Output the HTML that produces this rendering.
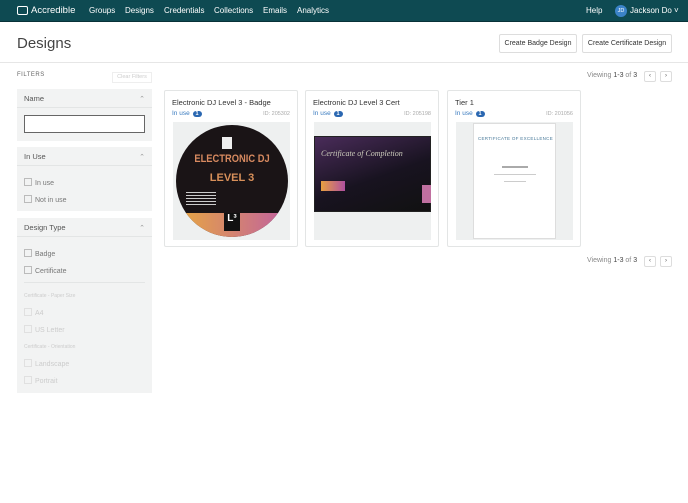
<!DOCTYPE html>
<html><head><style>
*{box-sizing:border-box;margin:0;padding:0}
body{width:688px;height:503px;background:#fff;font-family:"Liberation Sans",sans-serif;color:#333;position:relative;overflow:hidden}
.a{position:absolute}
.nav{left:0;top:0;width:688px;height:22px;background:#0e4a52;border-bottom:1px solid #083238}
.nav span{position:absolute;top:6px;font-size:8px;color:#fff}
.btn{border:1px solid #ddd;border-radius:2px;background:#fff;font-size:7px;color:#333;text-align:center;line-height:17px;height:19px}
.panel{background:#f2f3f3;left:17px;width:135px}
.ph{height:19px;border-bottom:1px solid #e3e5e5;font-size:7.5px;color:#555;padding:5px 7px;position:relative}
.ph:after{content:"⌃";position:absolute;right:7px;top:6px;font-size:7px;color:#999}
.cb{position:absolute;left:7px;font-size:7px;color:#777}
.cb:before{content:"";display:inline-block;width:6px;height:6px;border:1px solid #bbb;margin-right:3px;vertical-align:-1px}
.faint{color:#ccc}
.faint:before{border-color:#e0e0e0}
.card{top:90px;width:134px;height:157px;border:1px solid #e3e5e5;border-radius:2px;background:#fff}
.card .t{position:absolute;left:7px;top:7px;font-size:7.5px;color:#333}
.card .u{position:absolute;left:7px;top:19px;font-size:6.5px;color:#3a7bbf}
.card .u b{display:inline-block;background:#2a67b1;color:#fff;border-radius:4px;padding:0 3px;font-size:5.5px;margin-left:1px}
.card .id{position:absolute;right:7px;top:20px;font-size:5.5px;color:#aaa}
.card .im{position:absolute;left:8px;top:31px;width:117px;height:118px;background:#eef0f0}
.pg{font-size:7px;color:#888}
.pb{width:12px;height:11px;border:1px solid #ddd;border-radius:2px;font-size:6px;text-align:center;line-height:9px;color:#555}
</style></head><body>
<div class="a nav">
<div class="a" style="left:17px;top:6px;width:11px;height:9px;border:1.3px solid #fff;border-radius:2px"></div>
<span style="left:31px;top:5px;font-size:9.5px">Accredible</span>
<span style="left:89px">Groups</span><span style="left:125px">Designs</span><span style="left:164px">Credentials</span><span style="left:214px">Collections</span><span style="left:263px">Emails</span><span style="left:297px">Analytics</span>
<span style="left:586px">Help</span>
<div class="a" style="left:615px;top:5px;width:12px;height:12px;border-radius:6px;background:#3b83c8;color:#fff;font-size:5.5px;text-align:center;line-height:12px">JD</div>
<span style="left:630px">Jackson Do ˅</span>
</div>
<div class="a" style="left:17px;top:35px;font-size:15px;color:#444">Designs</div>
<div class="a btn" style="left:499px;top:34px;width:78px">Create Badge Design</div>
<div class="a btn" style="left:582px;top:34px;width:90px">Create Certificate Design</div>
<div class="a" style="left:0;top:62px;width:688px;height:1px;background:#e6e6e6"></div>
<div class="a" style="left:17px;top:72px;font-size:6px;color:#666;letter-spacing:.5px">FILTERS</div>
<div class="a" style="left:112px;top:72px;width:40px;height:11px;border:1px solid #eee;font-size:5.5px;color:#ccc;text-align:center;line-height:9px">Clear Filters</div>
<div class="a panel" style="top:89px;height:52px"><div class="ph">Name</div>
<div class="a" style="left:7px;top:26px;width:121px;height:18px;background:#fff;border:1px solid #666"></div></div>
<div class="a panel" style="top:147px;height:64px"><div class="ph">In Use</div>
<div class="cb" style="top:31px">In use</div><div class="cb" style="top:48px">Not in use</div></div>
<div class="a panel" style="top:218px;height:175px"><div class="ph">Design Type</div>
<div class="cb" style="top:31px">Badge</div><div class="cb" style="top:48px">Certificate</div>
<div class="a" style="left:7px;top:64px;width:121px;height:1px;background:#e3e5e5"></div>
<div class="a" style="left:7px;top:75px;font-size:5px;color:#ccc">Certificate - Paper Size</div>
<div class="cb faint" style="top:90px">A4</div><div class="cb faint" style="top:107px">US Letter</div>
<div class="a" style="left:7px;top:126px;font-size:5px;color:#ccc">Certificate - Orientation</div>
<div class="cb faint" style="top:141px">Landscape</div><div class="cb faint" style="top:158px">Portrait</div></div>
<div class="a pg" style="left:587px;top:72px">Viewing <span style="color:#444">1-3</span> of <span style="color:#444">3</span></div>
<div class="a pb" style="left:644px;top:71px">‹</div><div class="a pb" style="left:660px;top:71px">›</div>
<div class="a pg" style="left:587px;top:257px">Viewing <span style="color:#444">1-3</span> of <span style="color:#444">3</span></div>
<div class="a pb" style="left:644px;top:256px">‹</div><div class="a pb" style="left:660px;top:256px">›</div>

<div class="a card" style="left:164px"><div class="t">Electronic DJ Level 3 - Badge</div><div class="u">In use <b>1</b></div><div class="id">ID: 205302</div>
<div class="im"><div class="a" style="left:3px;top:3px;width:112px;height:112px;border-radius:56px;background:#1a1416;overflow:hidden">
<div class="a" style="left:0;top:88px;width:112px;height:30px;background:linear-gradient(90deg,#e8a840,#c060a0)"></div>
<div class="a" style="left:46px;top:12px;width:10px;height:12px;background:#eee"></div>
<div class="a" style="left:0;top:28px;width:112px;text-align:center;font-size:11px;font-weight:bold;color:#d88a60;transform:scaleX(.85)">ELECTRONIC DJ</div>
<div class="a" style="left:0;top:47px;width:112px;text-align:center;font-size:11px;font-weight:bold;color:#d8905a">LEVEL 3</div>
<div class="a" style="left:10px;top:67px;width:30px;height:14px;background:repeating-linear-gradient(#ccc 0 1px,transparent 1px 3px)"></div>
<div class="a" style="left:48px;top:88px;width:16px;height:18px;background:#111;color:#fff;font-size:10px;font-weight:bold;text-align:center">L³</div>
</div></div></div>
<div class="a card" style="left:305px"><div class="t">Electronic DJ Level 3 Cert</div><div class="u">In use <b>1</b></div><div class="id">ID: 205198</div>
<div class="im"><div class="a" style="left:0;top:14px;width:117px;height:76px;background:linear-gradient(160deg,#4a2c5a,#181320 55%,#111);border:1px solid #222">
<div class="a" style="left:6px;top:12px;font-size:8px;font-style:italic;font-family:'Liberation Serif',serif;color:#ccb">Certificate of Completion</div>
<div class="a" style="left:6px;top:44px;width:24px;height:10px;background:linear-gradient(90deg,#e8a040,#b050a0)"></div>
<div class="a" style="left:107px;top:48px;width:9px;height:18px;background:#c070a0"></div></div></div></div>
<div class="a card" style="left:447px"><div class="t">Tier 1</div><div class="u">In use <b>1</b></div><div class="id">ID: 201056</div>
<div class="im"><div class="a" style="left:17px;top:1px;width:83px;height:116px;background:#fff;border:1px solid #ddd">
<div class="a" style="left:0;top:12px;width:83px;text-align:center;font-size:4.5px;color:#4a7a9a;letter-spacing:.3px">CERTIFICATE OF EXCELLENCE</div>
<div class="a" style="left:28px;top:42px;width:26px;height:2px;background:#aaa"></div>
<div class="a" style="left:20px;top:50px;width:42px;height:1px;background:#ccc"></div>
<div class="a" style="left:30px;top:57px;width:22px;height:1px;background:#ccc"></div>
</div></div></div>
</body></html>
